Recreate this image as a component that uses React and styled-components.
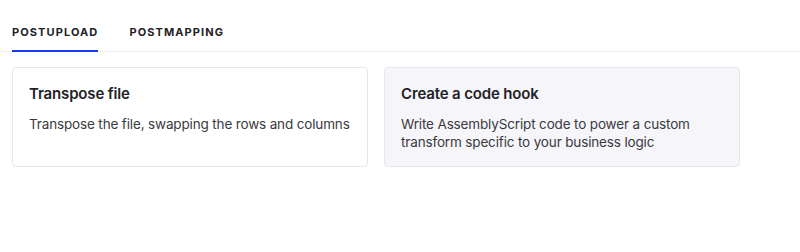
import React, {useState} from 'react';
import styled, {createGlobalStyle} from 'styled-components';

const Global = createGlobalStyle`
    body {
        margin: 0;
        background: #fff;
        font-family: Inter, "Noto Sans", sans-serif;
        color: #222226;
    }
`;

const Page = styled.div`
    padding: 20px 0 0 0;
`;

const TabBar = styled.div`
    display: flex;
    gap: 31px;
    padding: 0 12px;
    border-bottom: 1px solid #ebebf0;
`;

const Tab = styled.button`
    background: none;
    border: none;
    margin: 0;
    padding: 5px 0 11px 0;
    font-family: Inter, sans-serif;
    font-size: 11px;
    line-height: 14px;
    font-weight: 700;
    letter-spacing: 0.1em;
    color: #222226;
    cursor: pointer;
    border-bottom: 2px solid ${p => (p.$active ? '#1a3cf0' : 'transparent')};
    margin-bottom: -1px;
`;

const Cards = styled.div`
    display: grid;
    grid-template-columns: repeat(2, 356px);
    gap: 16px;
    padding: 15px 12px;
`;

const Card = styled.div`
    height: 100px;
    box-sizing: border-box;
    padding: 16px;
    border: 1px solid #e6e6ec;
    border-radius: 4px;
    background: ${p => (p.$shaded ? '#f5f5fa' : '#fff')};
    cursor: pointer;
`;

const Title = styled.h3`
    margin: 0 0 11px 0;
    font-size: 15px;
    line-height: 20px;
    font-weight: 600;
    letter-spacing: -0.15px;
    color: #222226;
`;

const Desc = styled.p`
    margin: 0;
    font-size: 13.5px;
    line-height: 18px;
    letter-spacing: -0.15px;
    color: #3a3a40;
`;

const tabs = ['POSTUPLOAD', 'POSTMAPPING'];

export default function App() {
    const [active, setActive] = useState(0);
    return (
        <Page>
            <Global />
            <TabBar>
                {tabs.map((t, i) => (
                    <Tab key={t} $active={i === active} onClick={() => setActive(i)}>{t}</Tab>
                ))}
            </TabBar>
            <Cards>
                <Card>
                    <Title>Transpose file</Title>
                    <Desc>Transpose the file, swapping the rows and columns</Desc>
                </Card>
                <Card $shaded>
                    <Title>Create a code hook</Title>
                    <Desc>Write AssemblyScript code to power a custom transform specific to your business logic</Desc>
                </Card>
            </Cards>
        </Page>
    );
}
